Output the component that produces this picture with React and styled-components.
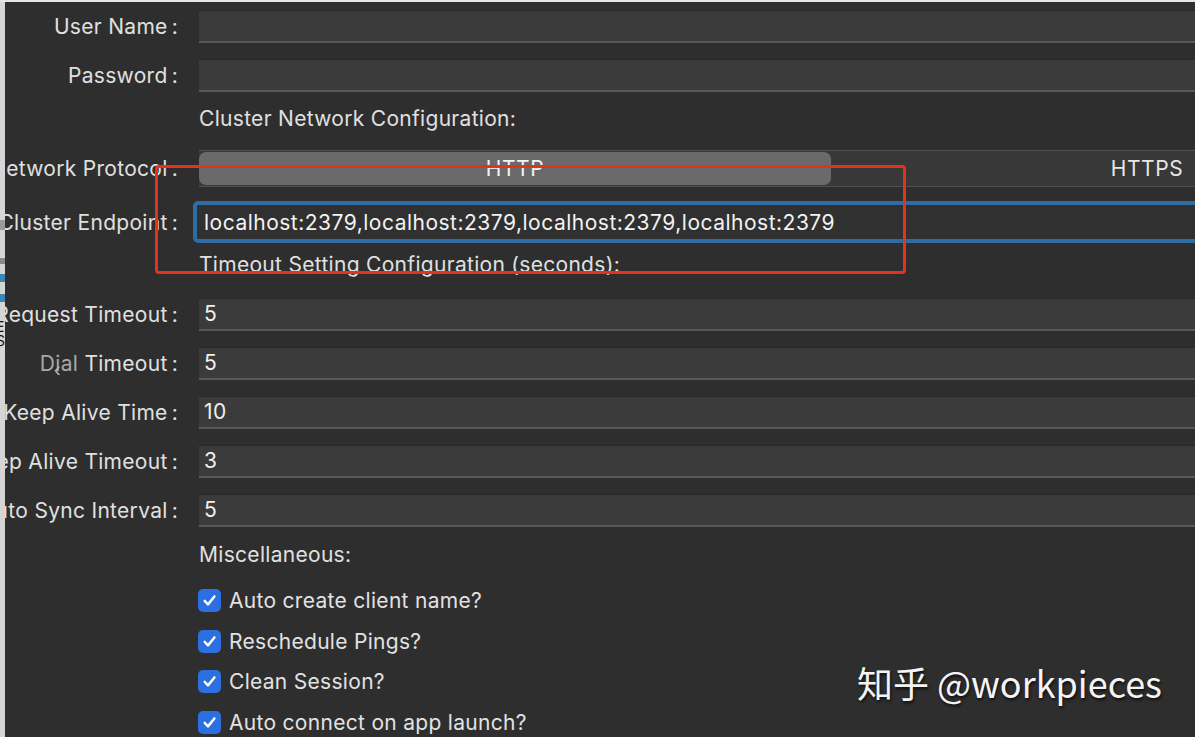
import React from "react";
import styled, { createGlobalStyle } from "styled-components";

const GlobalStyle = createGlobalStyle`
  html, body { margin: 0; padding: 0; background: #2e2e2e; overflow: hidden; }
  * { box-sizing: border-box; }
`;

const Screen = styled.div`
  position: relative;
  width: 1195px;
  height: 737px;
  overflow: hidden;
  display: flex;
  background: #2e2e2e;
  border-top: 2px solid #e4e4e4;
  font-family: Inter, "Noto Sans", "Liberation Sans", sans-serif;
  font-size: 21px;
  letter-spacing: 0.3px;
  color: #dcdcdc;
`;

const SideStrip = styled.div`
  position: relative;
  z-index: 2;
  flex: 0 0 5px;
  background: #d6d6d6;
  overflow: hidden;
`;

const StripMark = styled.div`
  position: absolute;
  left: 0;
  top: ${(p) => p.$top}px;
  width: 5px;
  height: ${(p) => p.$h}px;
  background: ${(p) => p.$c};
`;

const StripLetter = styled.span`
  position: absolute;
  left: -4px;
  top: ${(p) => p.$top}px;
  font-size: 14px;
  line-height: 14px;
  color: #111;
`;

const Panel = styled.div`
  flex: 1;
  min-width: 0;
  padding-top: 8px;
  display: flex;
  flex-direction: column;
`;

const Row = styled.div`
  display: grid;
  grid-template-columns: 173px 1264px;
  column-gap: 21px;
  align-items: center;
  margin-top: ${(p) => p.$mt || 0}px;
  height: ${(p) => p.$h}px;
`;

const Label = styled.div`
  display: flex;
  justify-content: flex-end;
  white-space: nowrap;
  color: #e0e0e0;
`;

const LabelText = styled.span`
  flex-shrink: 0;
  position: relative;
`;

const Dim = styled.span`
  color: #a9a9a9;
`;

const Caret = styled.span`
  position: absolute;
  left: 14px;
  top: 8px;
  font-size: 18px;
  color: #bdbdbd;
`;

const Colon = styled.span`
  margin-left: 4px;
`;

const TextField = styled.div`
  height: 33px;
  background: #3b3b3b;
  border-bottom: 2px solid #585858;
  box-shadow: inset 0 1px 0 #282828;
  display: flex;
  align-items: center;
  padding-left: 5px;
  color: #f0f0f0;
  letter-spacing: 0.5px;
`;

const FocusField = styled.div`
  height: 42px;
  margin-left: -6px;
  border: 4px solid #2f6ca3;
  border-radius: 5px;
  background: #303030;
  display: flex;
  align-items: center;
  padding-left: 7px;
  color: #f2f2f2;
  letter-spacing: 0.5px;
`;

const Heading = styled.div`
  grid-column: 2;
  line-height: 24px;
  color: #e0e0e0;
`;

const Segmented = styled.div`
  height: 37px;
  display: grid;
  grid-template-columns: 1fr 1fr;
  background: #383838;
  border-top: 1px solid #505050;
  border-bottom: 1px solid #505050;
`;

const Segment = styled.div`
  display: flex;
  align-items: center;
  justify-content: center;
  border-radius: 7px;
  margin: 1px 0;
  background: ${(p) => (p.$active ? "#6a6a6a" : "transparent")};
  color: ${(p) => (p.$active ? "#f4f4f4" : "#e6e6e6")};
  letter-spacing: 0.6px;
`;

const CheckList = styled.div`
  margin-top: 13px;
  display: flex;
  flex-direction: column;
  padding-left: 193px;
`;

const CheckRow = styled.div`
  height: 40.7px;
  display: flex;
  align-items: center;
  gap: 8px;
  color: #e2e2e2;
`;

const Box = styled.span`
  width: 23px;
  height: 23px;
  border-radius: 5px;
  background: #2b6fe0;
  display: flex;
  align-items: center;
  justify-content: center;
  flex-shrink: 0;
`;

const Annotation = styled.div`
  position: absolute;
  left: 155px;
  top: 163px;
  width: 751px;
  height: 109px;
  border: 3px solid #e2331f;
  border-radius: 4px;
  pointer-events: none;
  z-index: 3;
`;

const Watermark = styled.div`
  position: absolute;
  left: 857px;
  top: 655px;
  font-family: "Noto Sans CJK SC", "Noto Sans", sans-serif;
  font-size: 36px;
  line-height: 50px;
  letter-spacing: 0;
  color: #f4f4f4;
  text-shadow: 1px 2px 3px rgba(0, 0, 0, 0.7);
  white-space: nowrap;
  z-index: 4;
`;

const Check = () => (
  <Box>
    <svg width="15" height="15" viewBox="0 0 14 14">
      <path d="M2.5 7.4 L5.6 10.6 L11.6 3.2" fill="none" stroke="#fff" strokeWidth="2.3" strokeLinecap="round" strokeLinejoin="round" />
    </svg>
  </Box>
);

const FieldRow = ({ label, value, mt, children }) => (
  <Row $mt={mt} $h={33}>
    <Label>
      <LabelText>
        {children || label}
        <Colon>:</Colon>
      </LabelText>
    </Label>
    <TextField>{value}</TextField>
  </Row>
);

export default function App() {
  return (
    <>
      <GlobalStyle />
      <Screen>
        <SideStrip>
          <StripMark $top={218} $h={10} $c="#9a9a9a" />
          <StripMark $top={256} $h={6} $c="#8a8a8a" />
          <StripMark $top={272} $h={8} $c="#3a87b8" />
          <StripMark $top={292} $h={8} $c="#3a87b8" />
          <StripLetter $top={318}>E</StripLetter>
          <StripLetter $top={332}>S</StripLetter>
        </SideStrip>
        <Panel>
          <FieldRow label="User Name" value="" mt={0} />
          <FieldRow label="Password" value="" mt={16} />
          <Row $mt={15} $h={24}>
            <Heading>Cluster Network Configuration:</Heading>
          </Row>
          <Row $mt={19} $h={37}>
            <Label>
              <LabelText>
                Network Protocol<Colon>:</Colon>
              </LabelText>
            </Label>
            <Segmented>
              <Segment $active>HTTP</Segment>
              <Segment>HTTPS</Segment>
            </Segmented>
          </Row>
          <Row $mt={14} $h={42}>
            <Label>
              <LabelText>
                Cluster Endpoint<Colon>:</Colon>
              </LabelText>
            </Label>
            <FocusField>localhost:2379,localhost:2379,localhost:2379,localhost:2379</FocusField>
          </Row>
          <Row $mt={10} $h={24}>
            <Heading>Timeout Setting Configuration (seconds):</Heading>
          </Row>
          <FieldRow label="Request Timeout" value="5" mt={21} />
          <FieldRow value="5" mt={16}>
            <Dim>Dial</Dim> Timeout
            <Caret>‹</Caret>
          </FieldRow>
          <FieldRow label="Keep Alive Time" value="10" mt={16} />
          <FieldRow label="Keep Alive Timeout" value="3" mt={16} />
          <FieldRow label="Auto Sync Interval" value="5" mt={16} />
          <Row $mt={16} $h={24}>
            <Heading>Miscellaneous:</Heading>
          </Row>
          <CheckList>
            <CheckRow><Check />Auto create client name?</CheckRow>
            <CheckRow><Check />Reschedule Pings?</CheckRow>
            <CheckRow><Check />Clean Session?</CheckRow>
            <CheckRow><Check />Auto connect on app launch?</CheckRow>
          </CheckList>
        </Panel>
        <Annotation />
        <Watermark>知乎 @workpieces</Watermark>
      </Screen>
    </>
  );
}
